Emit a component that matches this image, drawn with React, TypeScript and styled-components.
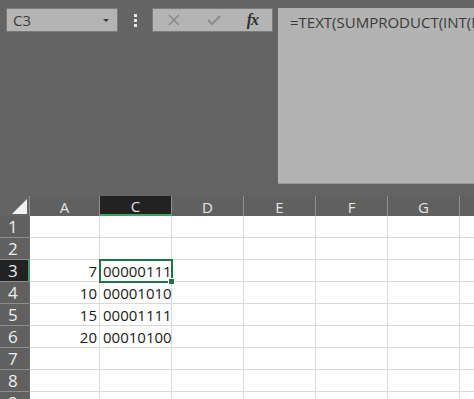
import styled, { createGlobalStyle } from "styled-components";

const GlobalStyle = createGlobalStyle`
  html, body {
    margin: 0;
    padding: 0;
    background: #646464;
    overflow: hidden;
  }
  body {
    font-family: "Open Sans", "Liberation Sans", sans-serif;
  }
`;

const Wrapper = styled.div`
  width: 474px;
  height: 399px;
  display: flex;
  flex-direction: column;
  background: #646464;
`;

const TopBar = styled.div`
  display: flex;
  align-items: flex-start;
  padding: 8px 0 0 6px;
  height: 176px;
`;

const NameBox = styled.div`
  width: 112px;
  height: 24px;
  box-sizing: border-box;
  background: #b4b4b4;
  border: 1px solid #7a7a7a;
  display: flex;
  align-items: center;
  justify-content: space-between;
  padding: 0 8px 0 6px;
  font-size: 15px;
  color: #3c3c3c;
`;

const Caret = styled.span`
  width: 0;
  height: 0;
  border-left: 3px solid transparent;
  border-right: 3px solid transparent;
  border-top: 3px solid #3a3a3a;
`;

const Dots = styled.div`
  width: 34px;
  height: 24px;
  display: flex;
  flex-direction: column;
  align-items: center;
  justify-content: center;
  gap: 2px;
`;

const Dot = styled.span`
  width: 3px;
  height: 3px;
  background: #e6e6e6;
`;

const FnBox = styled.div`
  width: 121px;
  height: 24px;
  box-sizing: border-box;
  background: #b4b4b4;
  border: 1px solid #7a7a7a;
  display: flex;
  align-items: center;
  justify-content: space-between;
  padding: 0 14px 0 14px;
`;

const FxLabel = styled.span`
  font-family: "Liberation Serif", serif;
  font-style: italic;
  font-weight: bold;
  font-size: 16px;
  color: #2e2e2e;
  letter-spacing: -1px;
`;

const FormulaBar = styled.div`
  flex: 1;
  margin-left: 5px;
  height: 176px;
  background: #b3b3b3;
  border-bottom: 1px solid #9a9a9a;
  box-sizing: border-box;
  padding: 4px 0 0 12px;
  font-size: 15px;
  color: #3a3a3a;
  white-space: nowrap;
  overflow: hidden;
`;

const Sheet = styled.div`
  margin-top: 12px;
  display: flex;
  flex-direction: column;
`;

const Row = styled.div<{ $h: number }>`
  display: flex;
  height: ${(p) => p.$h}px;
`;

const Corner = styled.div`
  width: 30px;
  flex: none;
  border-right: 1px solid #8e8e8e;
  box-sizing: border-box;
`;

const ColHead = styled.div<{ $w: number; $active?: boolean }>`
  width: ${(p) => p.$w}px;
  flex: none;
  box-sizing: border-box;
  border-right: 1px solid #8e8e8e;
  border-bottom: ${(p) => (p.$active ? "2px solid #3fa06a" : "none")};
  background: ${(p) => (p.$active ? "#222222" : "#606060")};
  color: #e4e4e4;
  font-size: 15px;
  display: flex;
  align-items: center;
  justify-content: center;
  padding-top: 2px;
`;

const RowHead = styled.div<{ $active?: boolean }>`
  width: 30px;
  flex: none;
  box-sizing: border-box;
  border-bottom: 1px solid #8e8e8e;
  border-right: ${(p) => (p.$active ? "2px solid #3fa06a" : "1px solid #6a6a6a")};
  background: ${(p) => (p.$active ? "#222222" : "#606060")};
  color: #eeeeee;
  font-size: 17px;
  display: flex;
  align-items: center;
  padding-left: 8px;
`;

const Cell = styled.div<{ $w: number; $right?: boolean; $selected?: boolean }>`
  width: ${(p) => p.$w}px;
  flex: none;
  box-sizing: border-box;
  background: #ffffff;
  border-right: 1px solid #d9d9d9;
  border-bottom: 1px solid #d9d9d9;
  font-size: 15px;
  color: #1a1a1a;
  display: flex;
  align-items: center;
  justify-content: ${(p) => (p.$right ? "flex-end" : "flex-start")};
  padding: 0 2px 0 3px;
  position: relative;
  outline: ${(p) => (p.$selected ? "2px solid #217346" : "none")};
  outline-offset: -1px;
  z-index: ${(p) => (p.$selected ? 1 : 0)};
`;

const Handle = styled.span`
  position: absolute;
  right: -4px;
  bottom: -4px;
  width: 5px;
  height: 5px;
  background: #217346;
  border: 1px solid #ffffff;
`;

const widths = [70, 72, 72, 72, 72, 72, 30];
const letters = ["A", "C", "D", "E", "F", "G", ""];

const data: Record<number, [string, string]> = {
  3: ["7", "00000111"],
  4: ["10", "00001010"],
  5: ["15", "00001111"],
  6: ["20", "00010100"],
};

export default function App() {
  const rows = [1, 2, 3, 4, 5, 6, 7, 8, 9];
  return (
    <Wrapper>
      <GlobalStyle />
      <TopBar>
        <NameBox>
          C3
          <Caret />
        </NameBox>
        <Dots>
          <Dot />
          <Dot />
          <Dot />
        </Dots>
        <FnBox>
          <svg width="14" height="14" viewBox="0 0 14 14">
            <path d="M2 2 L12 12 M12 2 L2 12" stroke="#8a8a8a" strokeWidth="1.6" fill="none" />
          </svg>
          <svg width="16" height="14" viewBox="0 0 16 14">
            <path d="M2 7 L6 11 L14 3" stroke="#8a8a8a" strokeWidth="2" fill="none" />
          </svg>
          <FxLabel>fx</FxLabel>
        </FnBox>
        <FormulaBar>=TEXT(SUMPRODUCT(INT(MID(</FormulaBar>
      </TopBar>
      <Sheet>
        <Row $h={20}>
          <Corner>
            <svg width="30" height="20" viewBox="0 0 30 20" style={{ display: "block" }}>
              <polygon points="27,3 27,18 12,18" fill="#f2f2f2" />
            </svg>
          </Corner>
          {letters.map((l, i) => (
            <ColHead key={i} $w={widths[i]} $active={l === "C"}>
              {l}
            </ColHead>
          ))}
        </Row>
        {rows.map((r) => (
          <Row $h={22} key={r}>
            <RowHead $active={r === 3}>{r}</RowHead>
            {widths.map((w, i) => (
              <Cell key={i} $w={w} $right={i === 0} $selected={r === 3 && i === 1}>
                {data[r] && i < 2 ? data[r][i] : ""}
                {r === 3 && i === 1 && <Handle />}
              </Cell>
            ))}
          </Row>
        ))}
      </Sheet>
    </Wrapper>
  );
}
